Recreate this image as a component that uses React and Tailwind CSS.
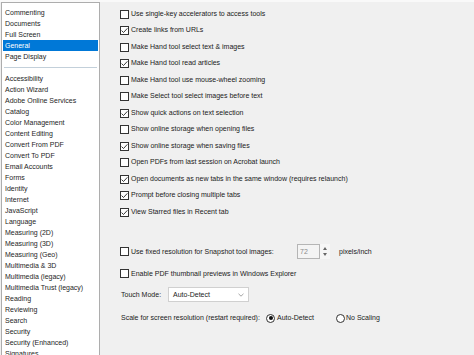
import React from 'react';

const categories = [
  'Commenting',
  'Documents',
  'Full Screen',
  'General',
  'Page Display',
  null,
  'Accessibility',
  'Action Wizard',
  'Adobe Online Services',
  'Catalog',
  'Color Management',
  'Content Editing',
  'Convert From PDF',
  'Convert To PDF',
  'Email Accounts',
  'Forms',
  'Identity',
  'Internet',
  'JavaScript',
  'Language',
  'Measuring (2D)',
  'Measuring (3D)',
  'Measuring (Geo)',
  'Multimedia & 3D',
  'Multimedia (legacy)',
  'Multimedia Trust (legacy)',
  'Reading',
  'Reviewing',
  'Search',
  'Security',
  'Security (Enhanced)',
  'Signatures',
];

const options = [
  ['Use single-key accelerators to access tools', false],
  ['Create links from URLs', true],
  ['Make Hand tool select text & images', false],
  ['Make Hand tool read articles', true],
  ['Make Hand tool use mouse-wheel zooming', false],
  ['Make Select tool select images before text', false],
  ['Show quick actions on text selection', true],
  ['Show online storage when opening files', false],
  ['Show online storage when saving files', true],
  ['Open PDFs from last session on Acrobat launch', false],
  ['Open documents as new tabs in the same window (requires relaunch)', true],
  ['Prompt before closing multiple tabs', true],
  ['View Starred files in Recent tab', true],
];

function Checkbox({ checked }) {
  return (
    <div className="w-[9px] h-[9px] shrink-0 border border-[#333] bg-white flex items-center justify-center">
      {checked && (
        <svg width="7" height="7" viewBox="0 0 7 7">
          <polyline points="0.6,3.6 2.5,5.5 6.4,1.3" fill="none" stroke="#222" strokeWidth="0.9" />
        </svg>
      )}
    </div>
  );
}

function Radio({ checked }) {
  return (
    <div className="w-[9px] h-[9px] shrink-0 rounded-full border border-[#333] bg-white flex items-center justify-center">
      {checked && <div className="w-[4px] h-[4px] rounded-full bg-[#111]" />}
    </div>
  );
}

export default function App() {
  return (
    <div
      className="w-[474px] h-[355px] overflow-hidden bg-[#f0f0f0] flex flex-col text-[7px] text-[#1a1a1a]"
      style={{ fontFamily: '"Liberation Sans", Arial, sans-serif' }}
    >
      <div className="h-[2px] bg-[#f9f9f9] shrink-0" />
      <div className="flex flex-1 min-h-0">
        {/* category list */}
        <div className="ml-[1px] w-[99px] h-full bg-white border border-b-0 border-[#adadad] pt-[4px] overflow-hidden shrink-0">
          {categories.map((c, i) =>
            c === null ? (
              <div key={i} className="h-[11px] flex items-center px-[2px]">
                <div className="h-px w-full bg-[#c3d0da]" />
              </div>
            ) : (
              <div
                key={i}
                className={
                  c === 'General'
                    ? 'h-[11px] leading-[11px] mx-[1px] pl-[2px] bg-[#0078d7] text-white whitespace-nowrap'
                    : 'h-[11px] leading-[11px] mx-[1px] pl-[2px] text-[#1e1e1e] whitespace-nowrap'
                }
              >
                {c}
              </div>
            )
          )}
        </div>

        {/* general settings */}
        <div className="flex-1 pl-[20px] pt-[3.75px] flex flex-col">
          {options.map(([label, checked], i) => (
            <div key={i} className="h-[16.5px] flex items-center gap-[2px] whitespace-nowrap">
              <Checkbox checked={checked} />
              <span>{label}</span>
            </div>
          ))}

          <div className="mt-[23px] h-[17px] flex items-center whitespace-nowrap">
            <Checkbox checked={false} />
            <span className="ml-[2px] w-[166px]">Use fixed resolution for Snapshot tool images:</span>
            <div className="w-[23px] h-[15px] border border-[#b5b5b5] bg-[#f4f4f4] pl-[2px] leading-[13px] text-[#8a8a8a]">72</div>
            <div className="w-[10px] h-[15px] bg-[#f6f6f6] flex flex-col items-center justify-center gap-[3px]">
              <svg width="4" height="3" viewBox="0 0 4 3"><polygon points="2,0 4,3 0,3" fill="#666" /></svg>
              <svg width="4" height="3" viewBox="0 0 4 3"><polygon points="0,0 4,0 2,3" fill="#666" /></svg>
            </div>
            <span className="ml-[9px]">pixels/inch</span>
          </div>

          <div className="mt-[5px] h-[17px] flex items-center gap-[2px] whitespace-nowrap">
            <Checkbox checked={false} />
            <span>Enable PDF thumbnail previews in Windows Explorer</span>
          </div>

          <div className="mt-[5px] h-[15px] flex items-center whitespace-nowrap">
            <span className="ml-[1px] w-[47px]">Touch Mode:</span>
            <div className="w-[81px] h-[15px] bg-white border border-[#d0d0d0] flex items-center justify-between pl-[4px] pr-[4px]">
              <span>Auto-Detect</span>
              <svg width="6" height="4" viewBox="0 0 6 4">
                <polyline points="0.5,0.8 3,3.2 5.5,0.8" fill="none" stroke="#9a9a9a" strokeWidth="0.9" />
              </svg>
            </div>
          </div>

          <div className="mt-[9px] h-[14px] flex items-center whitespace-nowrap">
            <span className="ml-[1px] w-[145px]">Scale for screen resolution (restart required):</span>
            <div className="w-[70px] flex items-center gap-[2px]">
              <Radio checked={true} />
              <span>Auto-Detect</span>
            </div>
            <div className="flex items-center gap-[1px]">
              <Radio checked={false} />
              <span>No Scaling</span>
            </div>
          </div>
        </div>
      </div>
    </div>
  );
}
